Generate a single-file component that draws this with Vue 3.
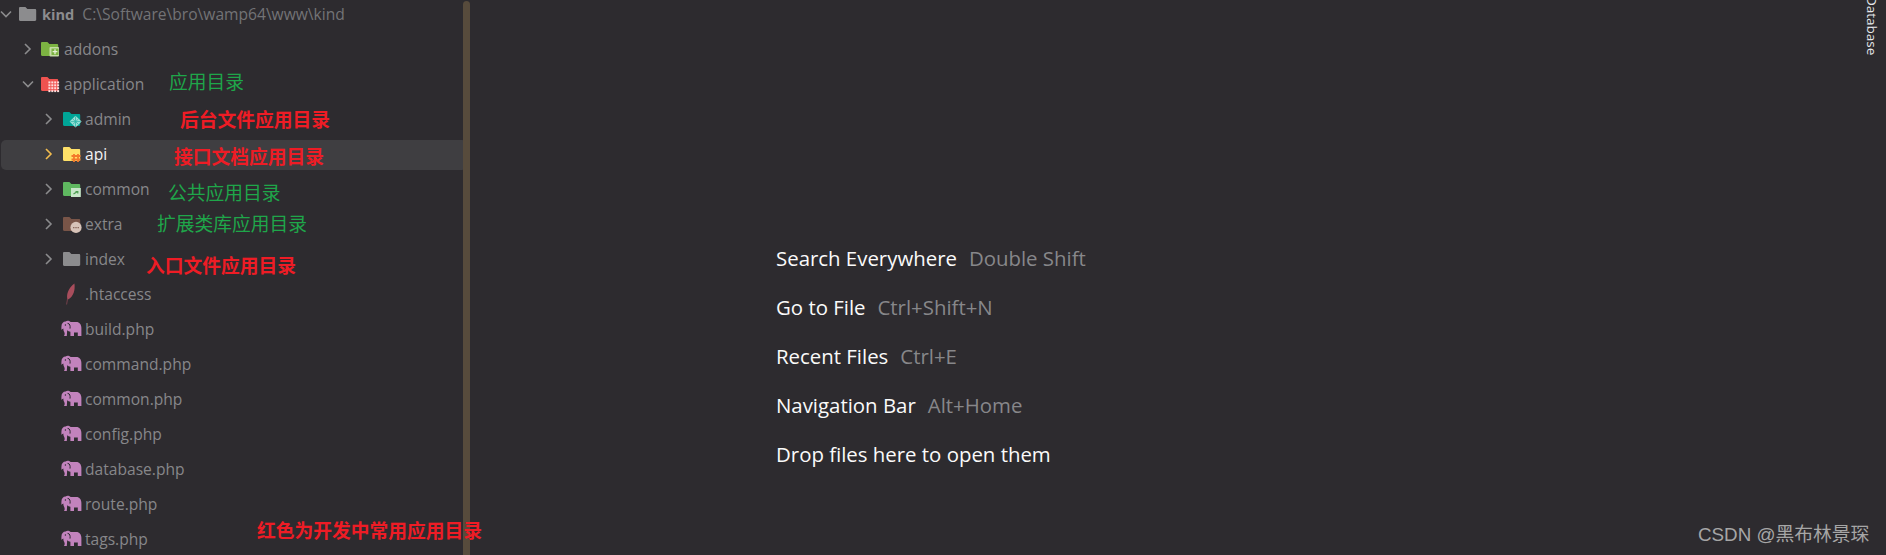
<script setup>
const rows = [
  { depth: 0, open: true, icon: 'plain', name: 'kind', path: 'C:\\Software\\bro\\wamp64\\www\\kind' },
  { depth: 1, icon: 'addons', name: 'addons' },
  { depth: 1, open: true, icon: 'app', name: 'application' },
  { depth: 2, icon: 'admin', name: 'admin' },
  { depth: 2, icon: 'api', name: 'api', active: true },
  { depth: 2, icon: 'common', name: 'common' },
  { depth: 2, icon: 'extra', name: 'extra' },
  { depth: 2, icon: 'plain', name: 'index' },
  { depth: 2, file: true, icon: 'feather', name: '.htaccess' },
  { depth: 2, file: true, icon: 'php', name: 'build.php' },
  { depth: 2, file: true, icon: 'php', name: 'command.php' },
  { depth: 2, file: true, icon: 'php', name: 'common.php' },
  { depth: 2, file: true, icon: 'php', name: 'config.php' },
  { depth: 2, file: true, icon: 'php', name: 'database.php' },
  { depth: 2, file: true, icon: 'php', name: 'route.php' },
  { depth: 2, file: true, icon: 'php', name: 'tags.php' }
]
const folderFill = {
  plain: '#8c8c8e', addons: '#7cb342', app: '#ef5350', admin: '#00a597',
  api: '#ffe168', common: '#5fb860', extra: '#795548'
}
const notes = [
  { text: '应用目录', x: 169, y: 81, kind: 'green' },
  { text: '后台文件应用目录', x: 180, y: 119, kind: 'red' },
  { text: '接口文档应用目录', x: 174, y: 156, kind: 'red' },
  { text: '公共应用目录', x: 168, y: 192, kind: 'green' },
  { text: '扩展类库应用目录', x: 157, y: 223, kind: 'green' },
  { text: '入口文件应用目录', x: 146, y: 265, kind: 'red' },
  { text: '红色为开发中常用应用目录', x: 257, y: 530, kind: 'red' }
]
const hints = [
  { label: 'Search Everywhere', key: 'Double Shift' },
  { label: 'Go to File', key: 'Ctrl+Shift+N' },
  { label: 'Recent Files', key: 'Ctrl+E' },
  { label: 'Navigation Bar', key: 'Alt+Home' },
  { label: 'Drop files here to open them', key: '' }
]
const elephant = 'M0.4 7C0.4 3.6 2.2 1.6 4.6 1.6C5.5 0.7 7 0.4 8.2 1.1C9 1.6 9.4 2 10 2L15.4 2C18.4 2 20.4 4.4 20.4 8.2L20.4 16L16.8 16L16.8 12.6L13 12.6L13 16L9.4 16L9.4 11.8C8 11.4 7 11 6.2 10.2L5.8 16L3 16C4.2 14.4 3.6 12.8 3 11.6C2.4 10.4 2.4 9.6 2.4 8.6C1.8 8.8 1.2 9 0.4 10Z'
</script>

<template>
  <div class="ide">
    <aside class="sidebar">
      <div class="tree">
        <div v-for="row in rows" :key="row.name + row.depth" class="row" :class="['depth-' + row.depth, { active: row.active, file: row.file }]">
          <span class="chev-slot">
            <svg v-if="!row.file" class="chev" viewBox="0 0 12 12" width="12" height="12">
              <path v-if="row.open" d="M1 3.5L6 8.5L11 3.5" />
              <path v-else d="M3 1L8 6L3 11" />
            </svg>
          </span>
          <svg class="icon" viewBox="0 0 20 18" width="20" height="18">
            <template v-if="!row.file">
              <path :fill="folderFill[row.icon]" d="M1 3.2C1 2.5 1.5 2 2.2 2L7.4 2L9.4 4L17 4C17.7 4 18.2 4.5 18.2 5.2L18.2 14.8C18.2 15.5 17.7 16 17 16L2.2 16C1.5 16 1 15.5 1 14.8Z" />
            </template>
            <g v-if="row.icon === 'addons'">
              <rect x="9.5" y="7" width="9.5" height="9.5" rx="1" fill="#c5dca6" />
              <rect x="11.5" y="8.5" width="7" height="6.5" fill="#7cb342" />
              <path d="M15 9.2V14.2M12.6 11.7H17.4" stroke="#e6f2d5" stroke-width="1.3" />
            </g>
            <g v-if="row.icon === 'app'" fill="#ffdcdb">
              <rect v-for="c in 16" :key="c" :x="8.4 + ((c - 1) % 4) * 2.9" :y="6.4 + Math.floor((c - 1) / 4) * 2.9" width="2" height="2" />
            </g>
            <g v-if="row.icon === 'admin'">
              <path d="M13.5 5.8L19.6 11.6L13.5 17.6L7.6 11.6Z" fill="#9adfd6" />
              <path d="M13.5 6.5V17M8.5 11.6H18.8M10.8 9L16.4 14.4M16.4 9L10.8 14.4" stroke="#2fb5a8" stroke-width=".8" fill="none" />
            </g>
            <path v-if="row.icon === 'api'" d="M12 9V17M16 9V17M9.5 11H18.5M9.5 14.5H18.5" stroke="#f4792b" stroke-width="1.8" fill="none" />
            <g v-if="row.icon === 'common'">
              <rect x="9" y="8" width="9.8" height="9" fill="#c8e6c9" />
              <path d="M11.5 14L15.5 11.5M13.5 11.5H15.8V13.5" stroke="#4c9c50" stroke-width="1.2" fill="none" />
            </g>
            <g v-if="row.icon === 'extra'">
              <circle cx="14" cy="12.4" r="5.6" fill="#d7c3b8" />
              <path d="M11.2 12.6H12.4M13.4 12.6H14.6M15.6 12.6H16.8" stroke="#795548" stroke-width="1.2" />
            </g>
            <g v-if="row.icon === 'feather'">
              <path d="M5.6 19.5L7 11" stroke="#74404a" stroke-width="1" fill="none" />
              <path d="M7 14.5C4.4 11 7.4 3 13.4 -1.4C14.4 4.4 12.6 12 7 14.5Z" fill="#a84d5c" />
            </g>
            <g v-if="row.icon === 'php'">
              <path :d="elephant" fill="#c283bd" />
              <path d="M6.6 3.4C9 3.4 9.4 6 9 8.6" stroke="#2d2b2f" stroke-width="1" fill="none" />
              <circle cx="4.4" cy="5" r=".7" fill="#2d2b2f" />
            </g>
          </svg>
          <span class="name" :class="{ root: row.depth === 0 }">{{ row.name }}</span>
          <span v-if="row.path" class="path">{{ row.path }}</span>
        </div>
      </div>
      <div class="scrollbar"></div>
    </aside>

    <main class="editor">
      <div class="hints">
        <p v-for="h in hints" :key="h.label" class="hint">
          <span class="hint-label">{{ h.label }}</span>
          <span v-if="h.key" class="hint-key">{{ h.key }}</span>
        </p>
      </div>
    </main>

    <span class="db-tab">Database</span>
    <span class="watermark">CSDN @黑布林景琛</span>
    <span
      v-for="n in notes"
      :key="n.text"
      class="note"
      :class="n.kind"
      :style="{ left: n.x + 'px', top: n.y + 'px' }"
    >{{ n.text }}</span>
  </div>
</template>

<style>
html, body { margin: 0; background: #2d2b2f; overflow: hidden; }
</style>

<style scoped>
.ide {
  position: relative;
  display: flex;
  width: 1886px;
  height: 555px;
  overflow: hidden;
  background: #2d2b2f;
  font-family: "Open Sans", "Noto Sans", sans-serif;
}
.sidebar {
  position: relative;
  flex: 0 0 470px;
  height: 555px;
  overflow: hidden;
}
.tree {
  display: flex;
  flex-direction: column;
  padding-right: 3px;
  margin-top: -4px;
}
.row {
  display: flex;
  flex: 0 0 35px;
  align-items: center;
  height: 35px;
  color: #87878a;
  font-size: 15.6px;
  white-space: nowrap;
  box-sizing: border-box;
}
.row.active {
  margin-left: 1px;
  padding-left: 42px;
  padding-bottom: 2px;
  height: 30px;
  flex-basis: 30px;
  margin-top: 4px;
  margin-bottom: 1px;
  background: #3f3e41;
  border-radius: 5px;
  color: #f4f4f4;
}
.depth-0 { padding-left: 0; }
.depth-1 { padding-left: 22px; }
.depth-2 { padding-left: 43px; }
.chev-slot {
  display: flex;
  flex: 0 0 18px;
  align-items: center;
}
.depth-2 .chev-slot { flex-basis: 19px; }
.file .chev-slot { flex-basis: 18px; }
.file .name { margin-left: 4px; }
.chev {
  fill: none;
  stroke: #8b8b8d;
  stroke-width: 1.6;
}
.active .chev { stroke: #f3bd4f; }
.icon { flex: 0 0 20px; overflow: visible; }
.name { margin-left: 3px; }
.depth-1 .name { margin-left: 4px; }
.name.root {
  font-weight: 700;
  font-size: 14.6px;
  color: #8c8c8e;
  margin-left: 4px;
}
.path {
  margin-left: 8px;
  color: #737376;
}
.scrollbar {
  position: absolute;
  top: 1px;
  bottom: 0;
  right: 0;
  width: 7px;
  border-radius: 4px 4px 0 0;
  background: #574b3c;
}
.editor {
  flex: 1;
  display: flex;
  flex-direction: column;
  padding: 234px 0 0 306px;
}
.hints {
  display: flex;
  flex-direction: column;
}
.hint {
  display: flex;
  align-items: center;
  gap: 12px;
  margin: 0;
  height: 48.8px;
  font-size: 20.4px;
  color: #fafafa;
  white-space: nowrap;
}
.hint-key { color: #87878a; }
.db-tab {
  position: absolute;
  top: -4px;
  left: 1865px;
  writing-mode: vertical-rl;
  font-size: 13.5px;
  color: #e4e6ea;
  line-height: 13px;
}
.watermark {
  position: absolute;
  left: 1698px;
  top: 523px;
  font-family: "Liberation Sans", "Noto Sans CJK SC", sans-serif;
  font-size: 18.8px;
  line-height: 24px;
  color: #a6a6a6;
  white-space: nowrap;
}
.note {
  position: absolute;
  transform: translateY(-50%);
  font-family: "Noto Sans CJK SC", sans-serif;
  font-size: 18.75px;
  line-height: 24px;
  white-space: nowrap;
}
.note.green { color: #1fa64a; }
.note.red { color: #ee1c25; font-weight: 700; }
</style>
